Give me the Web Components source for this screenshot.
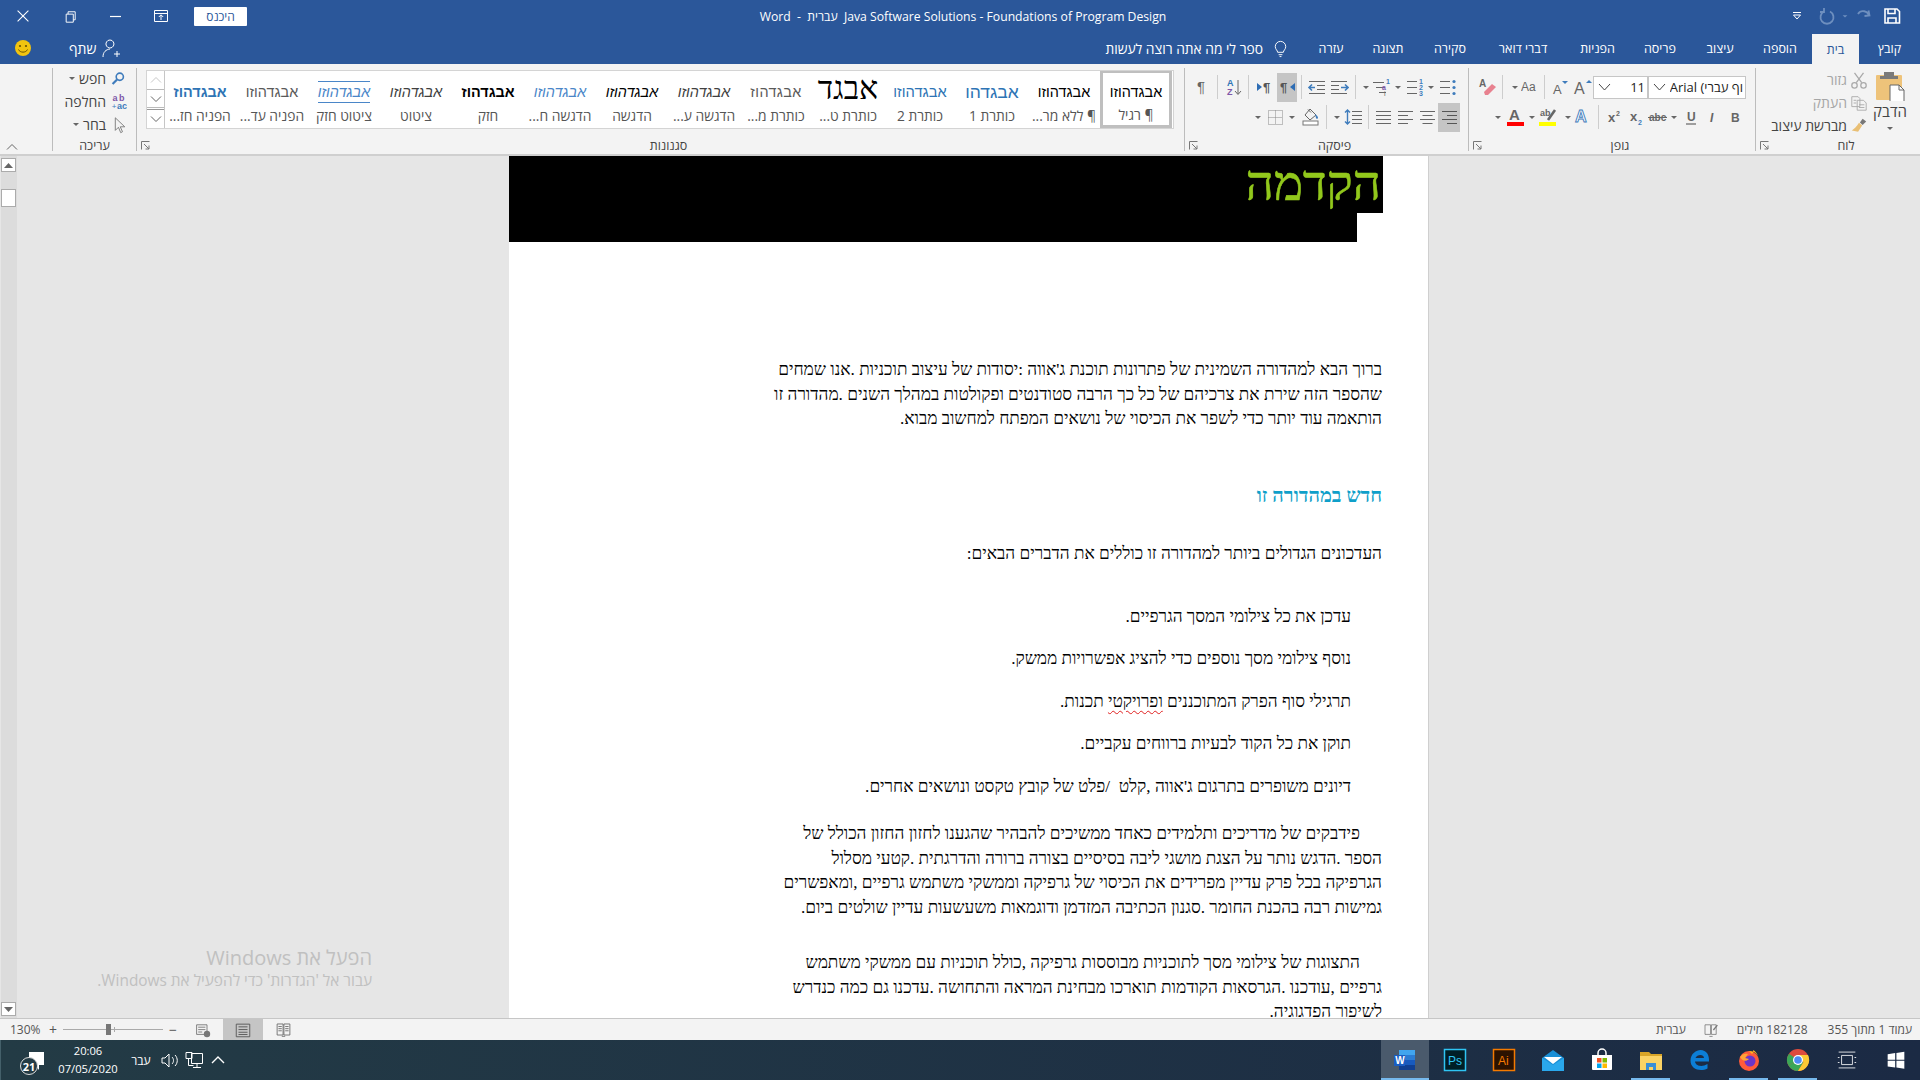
<!DOCTYPE html>
<html lang="he">
<head>
<meta charset="utf-8">
<title>Word</title>
<style>
  html, body { margin: 0; height: 1080px; overflow: hidden; }
  body { display: flex; flex-direction: column; width: 1920px; font-family: "Open Sans", "Liberation Sans", sans-serif; }
</style>
</head>
<body>
<word-titlebar title-text="Word  -  עברית  Java Software Solutions - Foundations of Program Design"></word-titlebar>
<word-tabs></word-tabs>
<word-ribbon></word-ribbon>
<word-workspace>
  <doc-banner>הקדמה</doc-banner>
  <doc-para space="116">ברוך הבא למהדורה השמינית של פתרונות תוכנת ג'אווה :יסודות של עיצוב תוכניות .אנו שמחים<br>שהספר הזה שירת את צרכיהם של כל כך הרבה סטודנטים ופקולטות במהלך השנים .מהדורה זו<br>הותאמה עוד יותר כדי לשפר את הכיסוי של נושאים המפתח למחשוב מבוא.</doc-para>
  <doc-para space="51" kind="heading">חדש במהדורה זו</doc-para>
  <doc-para space="35">העדכונים הגדולים ביותר למהדורה זו כוללים את הדברים הבאים:</doc-para>
  <doc-para space="38" kind="item">עדכן את כל צילומי המסך הגרפיים.</doc-para>
  <doc-para space="18" kind="item">נוסף צילומי מסך נוספים כדי להציג אפשרויות ממשק.</doc-para>
  <doc-para space="18" kind="item">תרגילי סוף הפרק המתוכננים <span style="text-decoration: underline wavy #e02020 1px; text-underline-offset: 3px">ופרויקטי</span> תכנות.</doc-para>
  <doc-para space="18" kind="item">תוקן את כל הקוד לבעיות ברווחים עקביים.</doc-para>
  <doc-para space="18" kind="item">דיונים משופרים בתרגום ג'אווה ,קלט &nbsp;/פלט של קובץ טקסט ונושאים אחרים.</doc-para>
  <doc-para space="23" kind="indent">פידבקים של מדריכים ותלמידים כאחד ממשיכים להבהיר שהגענו לחזון החזון הכולל של<br>הספר .הדגש נותר על הצגת מושגי ליבה בסיסיים בצורה ברורה והדרגתית .קטעי מסלול<br>הגרפיקה בכל פרק עדיין מפרידים את הכיסוי של גרפיקה וממשקי משתמש גרפיים ,ומאפשרים<br>גמישות רבה בהכנת החומר .סגנון הכתיבה המזדמן ודוגמאות משעשעות עדיין שולטים ביום.</doc-para>
  <doc-para space="31" kind="indent">התצוגות של צילומי מסך לתוכניות מבוססות גרפיקה ,כולל תוכניות עם ממשקי משתמש<br>גרפיים ,עודכנו .הגרסאות הקודמות תוארכו מבחינת המראה והתחושה .עדכנו גם כמה כנדרש<br>לשיפור הפדגוגיה.</doc-para>
</word-workspace>
<word-status></word-status>
<win-taskbar></win-taskbar>

<script>
// text inside the svg icons uses the same sans font as the ribbon
const T = (x, y, s, txt, fill = '#555', extra = '') =>
  `<text x="${x}" y="${y}" font-size="${s}" fill="${fill}" font-family="Liberation Sans, sans-serif" ${extra}>${txt}</text>`
const L = (d, c = '#666', w = 1) => `<path d="${d}" fill="none" stroke="${c}" stroke-width="${w}"/>`
const F = (d, c) => `<path d="${d}" fill="${c}"/>`
const BLUE = '#3f7cbc'

const ICONS = {
  // window controls
  close: L('M4 4l12 12M16 4L4 16', '#fff', 1.2),
  restore: L('M6.5 7.500h7.500v8.500h-7.500zM8.500 7.500v-2.500h7.500v8.500h-2', '#fff'),
  minimize: L('M5 10.500h11', '#fff', 1.2),
  display: L('M3.500 4.500h13v11h-13zM3.500 7.500h13M10 14v-5M7.800 11l2.200-2.200 2.200 2.200', '#fff'),
  save: L('M3 3h12l2.500 2.500v11.500h-14.500zM6 3.500v4h7v-4M6 17v-5h8v5', '#fff', 1.6),
  undo: L('M7 5.500a6.500 6.500 0 1 0 6 0M7 2v4h-4', '#6e8fbf', 1.8),
  redo: L('M16 10a6 6 0 0 0 -11 -2M15.500 4.500l1 5-5 .5', '#6e8fbf', 1.8),
  dim: F('M7 9h6l-3 3z', '#6e8fbf'),
  custom: L('M6 6.500h8', '#fff') + L('M6.500 9l3.500 4 3.500-4z', '#fff'),
  bulb: L('M7 14c0-2-2.500-3-2.500-6a5.500 5.500 0 0 1 11 0c0 3-2.500 4-2.500 6zM8 16.500h4M9 18.500h2', '#fff'),
  share: L('M10 10a4 4 0 1 0 -.1 0M3 19c0-5 3-7.500 7-8M14 16h6M17 13v6', '#fff'),
  smile: `<circle cx="10" cy="10" r="8" fill="#f2c40f"/><circle cx="7" cy="8" r="1.100" fill="#6a5200"/><circle cx="13" cy="8" r="1.100" fill="#6a5200"/>` + L('M5.500 11.500c1.500 3.500 7.500 3.500 9 0', '#6a5200'),
  // editing group
  find: `<circle cx="12" cy="7.500" r="4" fill="none" stroke="${BLUE}" stroke-width="1.800"/>` + L('M9 10.500l-5 5', BLUE, 2.4),
  replace: T(4, 9, 10, 'a', '#7e57a8', 'font-weight="bold"') + T(11, 9, 10, 'b', '#7e57a8', 'font-weight="bold"') + T(9, 18, 10, 'ac', BLUE, 'font-weight="bold"') + T(3, 18, 9, '+', BLUE),
  select: L('M7 2v14l3.500-3.500 2.500 6 2-1-2.500-5.500h5z', '#777'),
  // paragraph group
  pilcrow: T(5, 15, 15, '¶', '#666'),
  sort: T(3, 9, 9, 'A', '#2e74b5', 'font-weight="bold"') + T(3, 18, 9, 'Z', '#7e57a8', 'font-weight="bold"') + L('M14 3v14M11 14l3 3.500 3-3.500', '#666'),
  ltr: F('M3 6v8l5-4z', '#2e6db4') + T(9, 15, 13, '¶', '#555', 'font-weight="bold"'),
  rtl: T(3, 15, 13, '¶', '#555', 'font-weight="bold"') + F('M18 6v8l-5-4z', '#2e6db4'),
  outdent: L('M2 4.500h16M10 8.500h8M10 12.500h8M2 16.500h16', '#666') + L('M2 10.500h6M5 7.500l-3 3 3 3', BLUE, 1.6),
  indent: L('M2 4.500h16M2 8.500h8M2 12.500h8M2 16.500h16', '#666') + L('M12 10.500h7M16 7.500l3 3-3 3', BLUE, 1.6),
  multilevel: L('M1 5.500h11M4 10.500h9M7 15.500h7', '#666') + T(14, 7, 7, '1', BLUE, 'font-weight="bold"') + T(10, 13, 7, 'a', '#7e57a8', 'font-weight="bold"') + T(12, 19, 7, 'i', '#666'),
  numbered: L('M2 4.500h10M2 10.500h10M2 16.500h10', '#666') + T(14, 7, 7, '1', BLUE, 'font-weight="bold"') + T(14, 13, 7, '2', BLUE, 'font-weight="bold"') + T(14, 19, 7, '3', BLUE, 'font-weight="bold"'),
  bullets: L('M2 4.500h10M2 10.500h10M2 16.500h10', '#666') + `<circle cx="16" cy="4.500" r="1.600" fill="${BLUE}"/><circle cx="16" cy="10.500" r="1.600" fill="${BLUE}"/><circle cx="16" cy="16.500" r="1.600" fill="${BLUE}"/>`,
  borders: `<path d="M3.500 3.500h14v14h-14zM3.500 10.500h14M10.500 3.500v14" fill="none" stroke="#888" stroke-dasharray="1 1"/>`,
  shading: `<rect x="3" y="14" width="15" height="4" fill="#fff" stroke="#777"/>` + L('M10 2l-5 6 5 5 6-5zM8 2.500l3 3', '#666') + F('M15 7c2 1 3 3 3 4s-2 1-2 0z', BLUE),
  spacing: L('M9 4.500h10M9 8.500h10M9 12.500h10M9 16.500h10', '#666') + L('M4.500 3v14M2 5.500l2.500-2.500 2.500 2.500M2 14.500l2.500 2.500 2.500-2.500', BLUE, 1.4),
  justify: L('M3 4.500h15M3 8.500h15M3 12.500h15M3 16.500h15', '#666'),
  left: L('M3 4.500h15M3 8.500h10M3 12.500h15M3 16.500h10', '#666'),
  center: L('M3 4.500h15M5.500 8.500h10M3 12.500h15M5.500 16.500h10', '#666'),
  right: L('M3 4.500h15M8 8.500h10M3 12.500h15M8 16.500h10', '#555'),
  // font group
  eraser: T(2, 10, 10, 'A', '#666', 'font-weight="bold"') + `<path d="M7 15l8-8 4 3-8 8-3 0z" fill="#e8818f"/>`,
  aa: T(0, 15, 15, 'Aa', '#666'),
  shrink: T(3, 17, 13, 'A', '#666') + F('M12 4h6l-3 3z', BLUE),
  grow: T(2, 17, 16, 'A', '#666') + F('M14 6h6l-3-3z', BLUE),
  bold: T(6, 15, 12, 'B', '#666', 'font-weight="bold"'),
  italic: T(7, 15, 12, 'I', '#666', 'font-style="italic" font-weight="bold"'),
  under: T(6, 14, 12, 'U', '#666', 'font-weight="bold"') + L('M5 17h10', '#666', 1.2),
  strike: T(1, 14, 10, 'abc', '#666', 'font-weight="bold"') + L('M0 10.500h19', '#666'),
  sub: T(4, 14, 13, 'x', '#666', 'font-weight="bold"') + T(12, 18, 7, '2', BLUE, 'font-weight="bold"'),
  sup: T(4, 15, 13, 'x', '#666', 'font-weight="bold"') + T(12, 9, 7, '2', '#666', 'font-weight="bold"'),
  effect: T(1, 16, 18, 'A', '#fff', `font-weight="bold" stroke="${BLUE}" stroke-width="1"`),
  hilite: T(1, 9, 9, 'ab', '#666', 'font-weight="bold"') + L('M9 13l7-10', '#666', 2.6) + '<rect x="0" y="15" width="17" height="4" fill="#ffff00"/>',
  fcolor: T(3, 13, 15, 'A', '#666', 'font-weight="bold"') + '<rect x="1" y="15" width="17" height="4" fill="#ff0000"/>',
  // clipboard group
  paste: `<rect x="1" y="4" width="26" height="25" rx="1" fill="#eec37a"/><rect x="9" y="1" width="10" height="6" fill="#7a7a7a"/><rect x="5" y="5" width="18" height="3" fill="#7a7a7a"/><path d="M15 14h9l5 5v14h-14z" fill="#fff" stroke="#666"/><path d="M24 14v5h5" fill="none" stroke="#666"/>`,
  cut: L('M5 2l8 11M15 2l-8 11', '#a9a9a9', 1.4) + `<circle cx="5" cy="16" r="3" fill="none" stroke="#a9a9a9" stroke-width="1.400"/><circle cx="15" cy="16" r="3" fill="none" stroke="#a9a9a9" stroke-width="1.400"/>`,
  copy: L('M2 3h7l2 2v9h-9zM8 7h7l3 3v8h-10zM4 7h3M4 10h3M10 12h6M10 15h6', '#a9a9a9'),
  brush: F('M14 2l4 3-4 4-3-3z', '#777') + F('M10 6.500l3.500 3-4.500 7-7-1.500c3-2 5-4 8-8.500z', '#e9bf74'),
  // status bar
  web: L('M2 3.500h13v12h-13zM4 6.500h9M4 9.500h9M4 12.500h5', '#666') + `<circle cx="15" cy="15" r="4" fill="#777"/>`,
  print: L('M2.500 3.500h15v14h-15zM5 6.500h10M5 9.500h10M5 12.500h10M5 15h10', '#555'),
  read: L('M2.500 3.500h7v13h-7zM10.500 3.500h7v13h-7zM4 6.500h4M4 9h4M4 11.500h4M12 6.500h4M12 9h4M12 11.500h4', '#666') + L('M8 18h4', '#666'),
  proof: L('M2.500 3.500h7v12h-7zM10.500 3.500h6v12h-6zM8 18h4', '#777') + L('M13 10l5-6', '#777', 1.6),
  // tray
  note: F('M4 2h15v13h-5v5l-4-5h-6z', '#fff'),
  volume: L('M2 8v5h3l4 4v-13l-4 4zM12 7c2 2 2 5 0 7M15 5c3 3 3 8 0 11', '#fff'),
  net: L('M7.500 3.500h11v10h-11zM2 2.500h6v6h-6zM13 14v3M9 17.500h8M4.500 8v7.500h5', '#fff'),
  up: L('M4 13l6-6 6 6', '#fff', 1.4),
  // taskbar apps
  word: `<rect x="6" y="2" width="16" height="5" fill="#41a5ee"/><rect x="6" y="7" width="16" height="5" fill="#2b7cd3"/><rect x="6" y="12" width="16" height="5" fill="#185abd"/><rect x="6" y="17" width="16" height="5" fill="#103f91"/><rect x="1" y="7" width="11" height="11" fill="#1a5dc2"/>` + T(2.300, 16, 10, 'W', '#fff', 'font-weight="bold"'),
  ps: `<rect x="1.500" y="1.500" width="21" height="21" fill="#001e26" stroke="#2fc4f2" stroke-width="1.500"/>` + T(5, 17, 12, 'Ps', '#2fc4f2'),
  ai: `<rect x="1.500" y="1.500" width="21" height="21" fill="#2b1200" stroke="#f47a00" stroke-width="1.500"/>` + T(6, 17, 12, 'Ai', '#f47a00'),
  mail: F('M1 10l11-8 11 8v13h-22z', '#1a8fd6') + F('M1 10l11 7 11-7v13h-22z', '#2aa8ec') + F('M3 9h18l-9 7z', '#ffffff'),
  store: `<path d="M2 7h20v14a1 1 0 0 1 -1 1h-18a1 1 0 0 1 -1-1z" fill="#fff"/><path d="M8 7v-2a4 4 0 0 1 8 0v2" fill="none" stroke="#fff" stroke-width="1.500"/><rect x="7" y="10" width="4.500" height="4.500" fill="#f25022"/><rect x="12.500" y="10" width="4.500" height="4.500" fill="#7fba00"/><rect x="7" y="15.500" width="4.500" height="4.500" fill="#00a4ef"/><rect x="12.500" y="15.500" width="4.500" height="4.500" fill="#ffb900"/>`,
  folder: F('M1 4h9l2 2h11v16h-22z', '#d9a528') + F('M1 8h22v14h-22z', '#fbd365') + F('M7 22v-7h10v7h-3v-3h-4v3z', '#3a8fd6'),
  edge: `<path d="M21 13.500h-14c.5 4.500 7 6 12.500 2.500v4.500c-7 3.500-17 1-17-8 0-7 6-10.500 10-10.500 6 0 9 5 8.500 11.500zM16 10c0-4-7-4-8.500 0z" fill="#0c7ed6"/>`,
  firefox: `<circle cx="12" cy="13" r="10" fill="#ff5b3a"/><path d="M12 3c6 0 10 4 10 10 0-1-1-9-6-11 0 0 1 3-1 4z" fill="#ffb51f"/><circle cx="13" cy="13" r="5.500" fill="#6b35c9"/><path d="M3 9c2-3 5-4 8-3l-3 4 4 1c-3 3-7 2-9-2z" fill="#ffa436"/>`,
  chrome: `<circle cx="12" cy="12" r="11" fill="#dd4b3e"/><path d="M12 12L2.500 17.500A11 11 0 0 1 3 5.700z" fill="#3aa757"/><path d="M12 12l-9.500 5.500A11 11 0 0 0 12 23l5.500-9z" fill="#3aa757"/><path d="M12 7h10a11 11 0 0 1 -10 16l5.500-9z" fill="#fcc934"/><circle cx="12" cy="12" r="5" fill="#fff"/><circle cx="12" cy="12" r="3.800" fill="#4c8bf5"/>`,
  tasks: L('M5.500 6.500h13v11h-13zM2 2.500h20M2 21.500h20', '#fff') + L('M1 9h2M1 15h2M21 9h2M21 15h2', '#fff'),
  windows: F('M2 5l9-1.300v8h-9zM12.500 3.500l9.500-1.500v9.700h-9.500zM2 13h9v8l-9-1.300zM12.500 13h9.500v9.500l-9.500-1.500z', '#fff')
}

/**
 * A single icon out of the table above.
 */
class WordIcon extends HTMLElement {
  constructor () {
    super()
    this.attachShadow({ mode: 'open' })
  }

  connectedCallback () {
    const name = this.getAttribute('name')
    const size = this.getAttribute('size') || 20
    const box = this.getAttribute('box') || 20
    this.shadowRoot.innerHTML = `
      <style>
        :host { display: inline-flex; align-items: center; justify-content: center; flex: none; }
        svg { display: block; }
      </style>
      <svg width="${size}" height="${size}" viewBox="0 0 ${box} ${box}">${ICONS[name] || ''}</svg>`
  }
}
customElements.define('word-icon', WordIcon)

const ic = (name, size = 20, box = 20) => `<word-icon name="${name}" size="${size}" box="${box}"></word-icon>`

class WordTitlebar extends HTMLElement {
  constructor () {
    super()
    this.attachShadow({ mode: 'open' })
  }

  connectedCallback () {
    this.shadowRoot.innerHTML = `
      <style>
        :host { display: flex; align-items: center; flex: none; height: 32px; background: #2b579a; color: #fff; font-size: 12px; }
        .ctl { width: 46px; height: 32px; display: flex; align-items: center; justify-content: center; }
        .signin { width: 53px; height: 19px; margin-left: 10px; background: #fff; color: #2b579a; border-radius: 1px; font-size: 12px; display: flex; align-items: center; justify-content: center; }
        .title { flex: 1; text-align: center; white-space: pre; font-size: 12.2px; padding-right: 108px; }
        .qat { display: flex; align-items: center; margin-right: 18px; }
      </style>
      <div class="ctl">${ic('close', 18)}</div>
      <div class="ctl">${ic('restore', 19)}</div>
      <div class="ctl">${ic('minimize', 20)}</div>
      <div class="ctl">${ic('display', 20)}</div>
      <div class="signin" dir="rtl">היכנס</div>
      <div class="title">${this.getAttribute('title-text')}</div>
      <div class="qat">
        ${ic('custom', 20)}
        <span style="width:10px"></span>
        ${ic('undo', 20)}
        ${ic('dim', 16)}
        ${ic('redo', 20)}
        <span style="width:9px"></span>
        ${ic('save', 20)}
      </div>`
  }
}
customElements.define('word-titlebar', WordTitlebar)

class WordTabs extends HTMLElement {
  constructor () {
    super()
    this.attachShadow({ mode: 'open' })
  }

  connectedCallback () {
    const tabs = [['עזרה', 48], ['תצוגה', 66], ['סקירה', 58], ['דברי דואר', 88], ['הפניות', 61], ['פריסה', 64], ['עיצוב', 56], ['הוספה', 64], ['בית', 47], ['קובץ', 61]]
    this.shadowRoot.innerHTML = `
      <style>
        :host { display: flex; flex: none; height: 32px; background: #2b579a; color: #fff; font-size: 12.5px; }
        .left { display: flex; align-items: center; width: 1100px; padding-left: 13px; box-sizing: border-box; }
        .share { display: flex; align-items: center; gap: 4px; margin-left: 36px; font-size: 14px; }
        .tell { flex: none; width: 207px; box-sizing: border-box; padding-right: 17px; display: flex; align-items: center; justify-content: flex-end; gap: 8px; font-size: 13.800px; white-space: nowrap; }
        .tabs { display: flex; flex: none; }
        .tab { display: flex; align-items: center; justify-content: center; height: 32px; }
        .on { background: #f3f3f3; color: #2b579a; height: 30px; margin-top: 2px; }
      </style>
      <div class="left">
        ${ic('smile', 20)}
        <div class="share"><span dir="rtl">שתף</span>${ic('share', 20)}</div>
      </div>
      <div class="tell"><span dir="rtl">ספר לי מה אתה רוצה לעשות</span>${ic('bulb', 19)}</div>
      <div class="tabs">
        ${tabs.map(([t, w]) => `<div class="tab ${t === 'בית' ? 'on' : ''}" style="width:${w}px" dir="rtl">${t}</div>`).join('')}
      </div>`
  }
}
customElements.define('word-tabs', WordTabs)

// one strip of ribbon buttons: [name, width], a number is plain space
const strip = items => items.map(it => {
  if (typeof it === 'number') return `<span style="width:${it}px;flex:none"></span>`
  const [name, w, sel] = it
  if (name === 'sep') return '<span class="sep"></span>'
  if (name === 'caret') return `<span class="caret" style="width:${w}px"></span>`
  return `<span class="btn ${sel ? 'sel' : ''}" style="width:${w}px">${ic(name, Math.min(w, 20))}</span>`
}).join('')

const sep = ['sep']
const caret = w => ['caret', w]
const launch = '<span class="launch"><svg width="9" height="9" viewBox="0 0 9 9"><path d="M.5 8.500v-8h8M3 3l5 5M8 4.500v3.500h-3.500" fill="none" stroke="#777"/></svg></span>'

const GALLERY = [
  ['הפניה חז...', 'אבגדהוז', 'color:#2e74b5;font-weight:bold'],
  ['הפניה עד...', 'אבגדהוזו', 'color:#5a5a5a'],
  ['ציטוט חזק', 'אבגדהוזו', 'color:#4a86c8;font-style:italic;border-top:1px solid #4a86c8;border-bottom:1px solid #4a86c8;padding:2px 0'],
  ['ציטוט', 'אבגדהוזו', 'color:#404040;font-style:italic'],
  ['חזק', 'אבגדהוז', 'color:#000;font-weight:bold'],
  ['הדגשה ח...', 'אבגדהוזו', 'color:#4a86c8;font-style:italic'],
  ['הדגשה', 'אבגדהוזו', 'color:#000;font-style:italic'],
  ['הדגשה ע...', 'אבגדהוזו', 'color:#404040;font-style:italic'],
  ['כותרת מ...', 'אבגדהוז', 'color:#5a5a5a;letter-spacing:.4px'],
  ['כותרת ט...', 'אבגד', 'display:block;color:#000;font-size:32px;font-family:Liberation Serif,serif;line-height:24px;margin-bottom:8px'],
  ['כותרת 2', 'אבגדהוזו', 'color:#2e74b5;font-size:14.700px'],
  ['כותרת 1', 'אבגדהו', 'color:#2e74b5;font-size:17.500px'],
  ['¶ ללא מר...', 'אבגדהוזו', 'color:#000'],
  ['¶ רגיל', 'אבגדהוזו', 'color:#000']
]

class WordRibbon extends HTMLElement {
  constructor () {
    super()
    this.attachShadow({ mode: 'open' })
  }

  connectedCallback () {
    const parRow1 = [6, ['pilcrow', 22], 4, sep, 5, ['sort', 22], 3, sep, 4, ['ltr', 22], 2, ['rtl', 20, true], 4, sep, 4, ['outdent', 22], ['indent', 22], 5, sep, 5, caret(10), ['multilevel', 22], caret(10), 1, ['numbered', 22], caret(10), 1, ['bullets', 22]]
    const parRow2 = [68, caret(10), 1, ['borders', 22], 1, caret(10), 2, ['shading', 22], 5, sep, 5, caret(10), ['spacing', 22], 4, sep, 3, ['justify', 22], ['left', 22], ['center', 22], ['right', 22, true]]
    const fontRow2 = [23, caret(12), 2, ['fcolor', 20], caret(12), ['hilite', 22], 2, caret(12), ['effect', 18], 6, sep, 4, ['sup', 22], ['sub', 22], ['strike', 22], caret(10), 1, ['under', 22], ['italic', 22], ['bold', 22]]
    const chevron = '<svg width="13" height="8" viewBox="0 0 13 8"><path d="M1 1l5.500 6 5.500-6" fill="none" stroke="#444"/></svg>'
    this.shadowRoot.innerHTML = `
      <style>
        :host { display: flex; flex: none; height: 92px; box-sizing: border-box; padding: 4px 0 3px; background: #f3f3f3; border-bottom: 2px solid #cfcfcf; color: #444; font-size: 12.500px; }
        .group { display: flex; flex-direction: column; box-sizing: border-box; border-right: 1px solid #bcbcbc; flex: none; }
        .group:last-child { border-right: 0; }
        .body { height: 72px; flex: none; }
        .foot { height: 11px; display: flex; align-items: center; }
        .launch { width: 16px; flex: none; display: flex; justify-content: center; }
        .foot b { flex: 1; text-align: center; font-weight: normal; }
        .rows { padding-top: 4px; box-sizing: border-box; }
        .row { display: flex; align-items: center; height: 30px; }
        .btn { display: inline-flex; align-items: center; justify-content: center; height: 24px; flex: none; }
        .sel { background: #c5c5c5; height: 29px; }
        .sep { width: 1px; height: 24px; background: #cdcdcd; flex: none; }
        .caret { display: inline-flex; justify-content: center; align-items: center; height: 20px; flex: none; }
        .caret::after { content: ""; display: block; border: 3px solid transparent; border-top: 3px solid #666; border-bottom: 0; }
        .combo { height: 23px; box-sizing: border-box; border: 1px solid #c6c6c6; background: #fff; display: flex; align-items: center; font-size: 13px; color: #222; flex: none; overflow: hidden; }
        .combo svg { flex: none; margin: 0 4px; }
        .combo span { flex: 1; min-width: 0; white-space: nowrap; padding: 0 2px; overflow: hidden; }
        .collapse { display: flex; align-items: flex-end; height: 83px; padding: 0 0 0 6px; box-sizing: border-box; }
        .edit .line { display: flex; align-items: center; justify-content: flex-end; height: 23px; gap: 3px; padding-right: 9px; white-space: nowrap; font-size: 14px; }
        .edit .body { margin-top: -1px; height: 73px; }
        .edit .line .caret { width: 8px; }
        .gallery { display: flex; height: 59px; margin: 2px 0 0 9px; width: 1028px; box-sizing: border-box; border: 1px solid #d4d4d4; background: #fff; }
        .scroll { width: 17px; flex: none; display: flex; flex-direction: column; border-right: 1px solid #c6c6c6; background: #fff; }
        .scroll span { flex: 1; display: flex; align-items: center; justify-content: center; border-bottom: 1px solid #bbb; }
        .scroll span:last-child { border-bottom: 0; border-top: 1px solid #999; margin-top: 1px; }
        .items { display: grid; grid-template-columns: repeat(14, 72px); flex: none; margin-left: -1px; }
        .item { box-sizing: border-box; height: 57px; display: flex; flex-direction: column; align-items: center; overflow: hidden; }
        .item.now { border: 3px solid #bfbfbf; border-top-width: 2px; }
        .item .smp { height: 28px; margin-top: 7px; display: flex; align-items: center; justify-content: center; font-size: 14.400px; white-space: nowrap; font-family: "Liberation Sans", sans-serif; }
        .item.now .smp { margin-top: 5px; }
        .item .lab { font-size: 13.800px; color: #555; height: 20px; line-height: 20px; white-space: nowrap; }
        .clip { display: flex; justify-content: flex-end; }
        .clip .cols { display: flex; flex-direction: column; align-items: flex-end; padding-right: 2px; }
        .clip .line { display: flex; align-items: center; justify-content: flex-end; gap: 3px; height: 23px; white-space: nowrap; font-size: 14px; }
        .off { color: #a6a6a6; }
        .paste { width: 40px; margin-right: 10px; display: flex; flex-direction: column; align-items: center; padding-top: 3px; box-sizing: border-box; }
        .paste > span { margin-top: 1px; font-size: 15px; line-height: 19px; }
      </style>

      <div class="group" style="width:53px">
        <div class="collapse"><svg width="12" height="8" viewBox="0 0 12 8"><path d="M1 6.500l5-5 5 5" fill="none" stroke="#666"/></svg></div>
      </div>

      <div class="group edit" style="width:84px">
        <div class="body">
          <div class="line"><span class="caret"></span><span dir="rtl">חפש</span>${ic('find', 18)}</div>
          <div class="line"><span dir="rtl">החלפה</span>${ic('replace', 18)}</div>
          <div class="line"><span class="caret"></span><span dir="rtl">בחר</span>${ic('select', 18)}</div>
        </div>
        <div class="foot"><b dir="rtl">עריכה</b></div>
      </div>

      <div class="group" style="width:1048px">
        <div class="body">
          <div class="gallery">
            <div class="scroll">
              <span><svg width="12" height="8" viewBox="0 0 12 8"><path d="M1 6.500l5-5 5 5" fill="none" stroke="#c8c8c8"/></svg></span>
              <span><svg width="12" height="8" viewBox="0 0 12 8"><path d="M1 1.500l5 5 5-5" fill="none" stroke="#666"/></svg></span>
              <span><svg width="12" height="8" viewBox="0 0 12 8"><path d="M1 1.500l5 5 5-5" fill="none" stroke="#666"/></svg></span>
            </div>
            <div class="items">
              ${GALLERY.map(([lab, smp, css], i) => `<div class="item ${i === 13 ? 'now' : ''}"><span class="smp" dir="rtl"><span style="${css}">${smp}</span></span><span class="lab" dir="rtl">${lab}</span></div>`).join('')}
            </div>
          </div>
        </div>
        <div class="foot">${launch}<b dir="rtl">סגנונות</b></div>
      </div>

      <div class="group" style="width:284px">
        <div class="body rows">
          <div class="row">${strip(parRow1)}</div>
          <div class="row">${strip(parRow2)}</div>
        </div>
        <div class="foot">${launch}<b dir="rtl">פיסקה</b></div>
      </div>

      <div class="group" style="width:287px">
        <div class="body rows">
          <div class="row">
            ${strip([7, ['eraser', 22], 4, sep, 6, caret(12), ['aa', 16], 7, sep, 4, ['shrink', 22], ['grow', 22]])}
            <div class="combo" style="width:55px">${chevron}<span style="text-align:right">11</span></div>
            <div class="combo" style="width:98px">${chevron}<span dir="rtl">וף עברי) Arial</span></div>
          </div>
          <div class="row">${strip(fontRow2)}</div>
        </div>
        <div class="foot">${launch}<b dir="rtl">גופן</b></div>
      </div>

      <div class="group" style="width:164px">
        <div class="body clip">
          <div class="cols">
            <div class="line off"><span dir="rtl">גזור</span>${ic('cut', 18)}</div>
            <div class="line off"><span dir="rtl">העתק</span>${ic('copy', 18)}</div>
            <div class="line"><span dir="rtl">מברשת עיצוב</span>${ic('brush', 18)}</div>
          </div>
          <div class="paste">
            ${ic('paste', 30, 30)}
            <span dir="rtl">הדבק</span>
            <span class="caret" style="height:14px;width:12px;margin:0"></span>
          </div>
        </div>
        <div class="foot">${launch}<b dir="rtl">לוח</b></div>
      </div>`
  }
}
customElements.define('word-ribbon', WordRibbon)

class WordWorkspace extends HTMLElement {
  constructor () {
    super()
    this.attachShadow({ mode: 'open' })
  }

  connectedCallback () {
    this.shadowRoot.innerHTML = `
      <style>
        :host { display: flex; flex: none; height: 862px; background: #e6e6e6; overflow: hidden; }
        .bar { width: 16px; flex: none; margin-left: 1px; background: #dcdcdc; display: flex; flex-direction: column; align-items: stretch; padding: 2px 0; box-sizing: border-box; }
        .arrow { width: 15px; height: 14px; box-sizing: border-box; border: 1px solid #ababab; background: #fff; display: flex; align-items: center; justify-content: center; flex: none; }
        .thumb { width: 15px; height: 18px; box-sizing: border-box; border: 1px solid #ababab; background: #fff; margin-top: 17px; flex: none; }
        .gap { flex: 1; }
        .gray { width: 492px; flex: none; display: flex; flex-direction: column; justify-content: flex-end; align-items: flex-end; padding: 0 137px 27px 0; box-sizing: border-box; color: #c0c0c0; }
        .gray div { white-space: nowrap; }
        .wm1 { font-size: 20px; line-height: 26px; }
        .wm2 { font-size: 15.400px; line-height: 20px; }
        .page { width: 920px; flex: none; box-sizing: border-box; padding-right: 45px; background: #fff; border-right: 1px solid #cfcfcf; overflow: hidden; direction: rtl; }
      </style>
      <div class="bar">
        <div class="arrow"><svg width="9" height="5"><path d="M0 5l4.500-5 4.500 5z" fill="#666"/></svg></div>
        <div class="thumb"></div>
        <div class="gap"></div>
        <div class="arrow"><svg width="9" height="5"><path d="M0 0l4.500 5 4.500-5z" fill="#666"/></svg></div>
      </div>
      <div class="gray">
        <div class="wm1" dir="rtl">הפעל את Windows</div>
        <div class="wm2" dir="rtl">עבור אל 'הגדרות' כדי להפעיל את Windows.</div>
      </div>
      <div class="page"><slot></slot></div>`
  }
}
customElements.define('word-workspace', WordWorkspace)

class DocBanner extends HTMLElement {
  constructor () {
    super()
    this.attachShadow({ mode: 'open' })
  }

  connectedCallback () {
    this.shadowRoot.innerHTML = `
      <style>
        :host { display: block; direction: rtl; }
        .top { height: 57px; background: #000; color: #92c81c; font: 49px/55px "Liberation Serif", serif; -webkit-text-stroke: .6px #92c81c; padding-right: 2px; overflow: hidden; }
        .low { height: 29px; background: #000; margin-right: 26px; }
      </style>
      <div class="top"><slot></slot></div>
      <div class="low"></div>`
  }
}
customElements.define('doc-banner', DocBanner)

class DocPara extends HTMLElement {
  constructor () {
    super()
    this.attachShadow({ mode: 'open' })
  }

  connectedCallback () {
    this.shadowRoot.innerHTML = `
      <style>
        :host { display: block; direction: rtl; white-space: nowrap; color: #000; font: 17.200px/24.500px "Liberation Serif", serif; margin-top: ${this.getAttribute('space') || 0}px; margin-right: 1px; }
        :host([kind="heading"]) { color: #0f9fc9; font-weight: bold; font-size: 20px; }
        :host([kind="item"]) { margin-right: 32px; }
        :host([kind="indent"]) { text-indent: 22px; }
      </style>
      <slot></slot>`
  }
}
customElements.define('doc-para', DocPara)

class WordStatus extends HTMLElement {
  constructor () {
    super()
    this.attachShadow({ mode: 'open' })
  }

  connectedCallback () {
    this.shadowRoot.innerHTML = `
      <style>
        :host { display: flex; align-items: center; flex: none; height: 22px; box-sizing: border-box; border-top: 1px solid #c6c6c6; background: #f3f3f3; color: #555; font-size: 12px; }
        .zoom { width: 47px; box-sizing: border-box; padding-left: 10px; flex: none; }
        .pm { width: 12px; text-align: center; font-size: 14px; flex: none; }
        .slider { width: 100px; height: 1px; background: #aaa; margin: 0 4px; flex: none; display: flex; align-items: center; padding-left: 43px; box-sizing: border-box; gap: 3px; }
        .slider i { display: block; width: 5px; height: 11px; background: #777; flex: none; }
        .slider u { display: block; width: 1px; height: 5px; background: #aaa; flex: none; }
        .view { width: 40px; height: 21px; display: flex; align-items: center; justify-content: center; flex: none; }
        .on { background: #c5c5c5; }
        .right { margin-left: auto; display: flex; align-items: center; padding-right: 8px; white-space: nowrap; }
      </style>
      <span class="zoom">130%</span>
      <span class="pm">+</span>
      <div class="slider"><i></i><u></u></div>
      <span class="pm">−</span>
      <span style="width:4px"></span>
      <div class="view">${ic('web', 16)}</div>
      <div class="view on">${ic('print', 18)}</div>
      <div class="view">${ic('read', 17)}</div>
      <div class="right">
        <span dir="rtl">עברית</span>
        <span style="width:17px"></span>
        ${ic('proof', 16)}
        <span style="width:18px"></span>
        <span dir="rtl">182128 מילים</span>
        <span style="width:20px"></span>
        <span dir="rtl">עמוד 1 מתוך 355</span>
      </div>`
  }
}
customElements.define('word-status', WordStatus)

class WinTaskbar extends HTMLElement {
  constructor () {
    super()
    this.attachShadow({ mode: 'open' })
  }

  connectedCallback () {
    const apps = [['word', 'act'], ['ps', ''], ['ai', ''], ['mail', ''], ['store', ''], ['folder', 'run'], ['edge', ''], ['firefox', 'run'], ['chrome', 'run']]
    this.shadowRoot.innerHTML = `
      <style>
        :host { display: flex; align-items: center; flex: none; height: 40px; background: linear-gradient(90deg, #233b45, #1b2a44); color: #fff; font-size: 12px; border-left: 1px solid #44606a; box-sizing: border-box; }
        .tray { display: flex; align-items: center; flex: none; }
        .note { width: 24px; margin-left: 24px; display: flex; position: relative; }
        .badge { position: absolute; left: -5px; top: 7px; width: 16px; height: 16px; border-radius: 50%; background: #233b45; border: 1px solid #ddd; font-size: 11px; font-weight: bold; display: flex; align-items: center; justify-content: center; }
        .clock { width: 66px; margin-left: 6px; text-align: center; line-height: 18px; white-space: nowrap; font-size: 11.200px; }
        .lang { margin-left: 5px; width: 30px; text-align: center; }
        .apps { margin-left: auto; display: flex; align-items: stretch; height: 40px; }
        .app { width: 49px; display: flex; align-items: center; justify-content: center; box-sizing: border-box; position: relative; }
        .app.act { background: #4a5a6c; width: 48px; margin-right: 1px; box-shadow: inset 0 -2px 0 #76b9ed; }
        .app.run::after { content: ""; position: absolute; left: 5px; right: 5px; bottom: 0; height: 2px; background: #76b9ed; }
      </style>
      <div class="tray">
        <div class="note">${ic('note', 20)}<span class="badge">21</span></div>
        <div class="clock">20:06<br>07/05/2020</div>
        <div class="lang" dir="rtl">עבר</div>
        <span style="width:4px"></span>
        ${ic('volume', 20)}
        <span style="width:4px"></span>
        ${ic('net', 20)}
        <span style="width:4px"></span>
        ${ic('up', 20)}
      </div>
      <div class="apps">
        ${apps.map(([n, c]) => `<div class="app ${c}">${ic(n, 24, 24)}</div>`).join('')}
        <div class="app">${ic('tasks', 20, 24)}</div>
        <div class="app">${ic('windows', 20, 24)}</div>
      </div>`
  }
}
customElements.define('win-taskbar', WinTaskbar)
</script>
</body>
</html>
